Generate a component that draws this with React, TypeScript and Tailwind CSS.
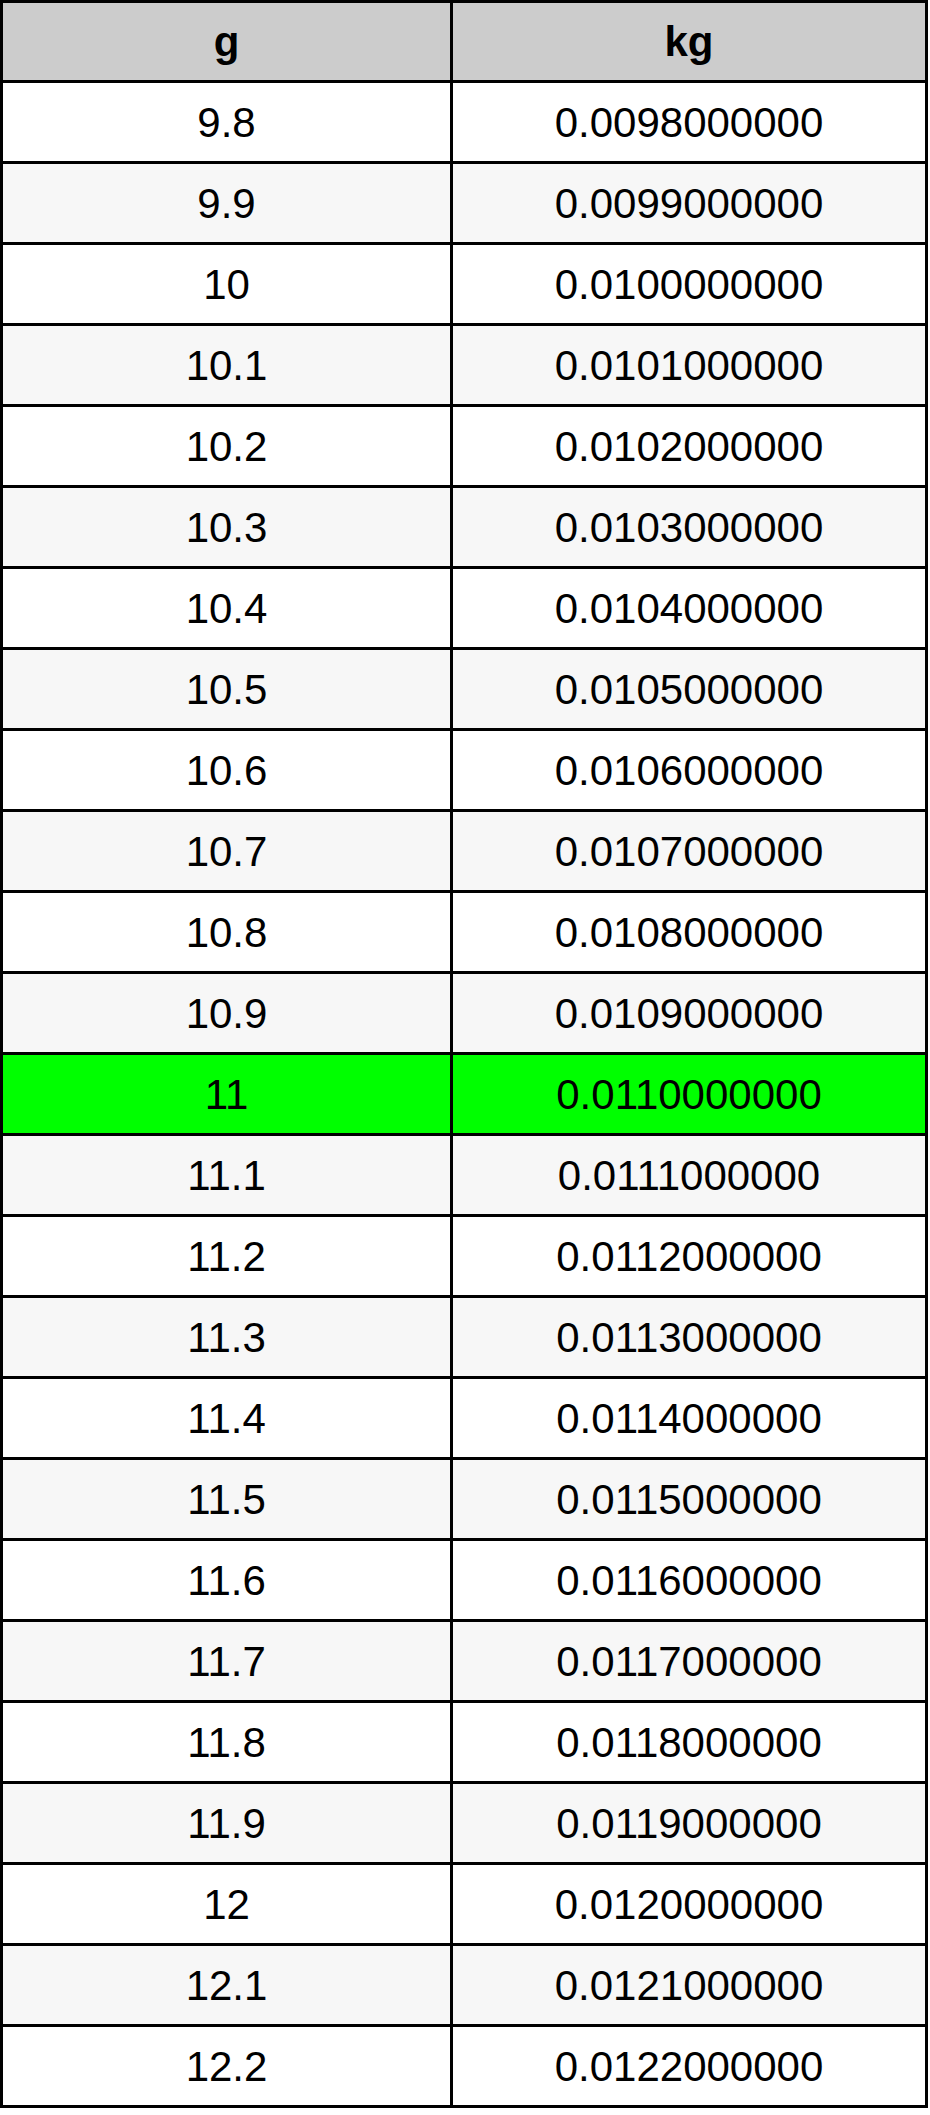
import React from "react";

const rows: [string, string][] = [
  ["9.8", "0.0098000000"],
  ["9.9", "0.0099000000"],
  ["10", "0.0100000000"],
  ["10.1", "0.0101000000"],
  ["10.2", "0.0102000000"],
  ["10.3", "0.0103000000"],
  ["10.4", "0.0104000000"],
  ["10.5", "0.0105000000"],
  ["10.6", "0.0106000000"],
  ["10.7", "0.0107000000"],
  ["10.8", "0.0108000000"],
  ["10.9", "0.0109000000"],
  ["11", "0.0110000000"],
  ["11.1", "0.0111000000"],
  ["11.2", "0.0112000000"],
  ["11.3", "0.0113000000"],
  ["11.4", "0.0114000000"],
  ["11.5", "0.0115000000"],
  ["11.6", "0.0116000000"],
  ["11.7", "0.0117000000"],
  ["11.8", "0.0118000000"],
  ["11.9", "0.0119000000"],
  ["12", "0.0120000000"],
  ["12.1", "0.0121000000"],
  ["12.2", "0.0122000000"],
];

export default function App() {
  return (
    <div className="bg-white w-[930px] h-[2115px]" style={{ fontFamily: '"Liberation Sans", Arial, sans-serif' }}>
      <div className="w-[928px] border-[3px] border-black text-black">
        <div className="flex h-[77px] bg-[#cccccc] font-bold text-[42px]">
          <div className="w-[450px] border-r-[3px] border-black flex items-center justify-center">g</div>
          <div className="flex-1 flex items-center justify-center">kg</div>
        </div>
        {rows.map(([a, b], i) => {
          const bg = a === "11" ? "bg-[#00ff00]" : i % 2 === 1 ? "bg-[#f7f7f7]" : "bg-white";
          return (
            <div key={a} className={`flex h-[81px] border-t-[3px] border-black text-[42px] ${bg}`}>
              <div className="w-[450px] border-r-[3px] border-black flex items-center justify-center">{a}</div>
              <div className="flex-1 flex items-center justify-center">{b}</div>
            </div>
          );
        })}
      </div>
    </div>
  );
}
